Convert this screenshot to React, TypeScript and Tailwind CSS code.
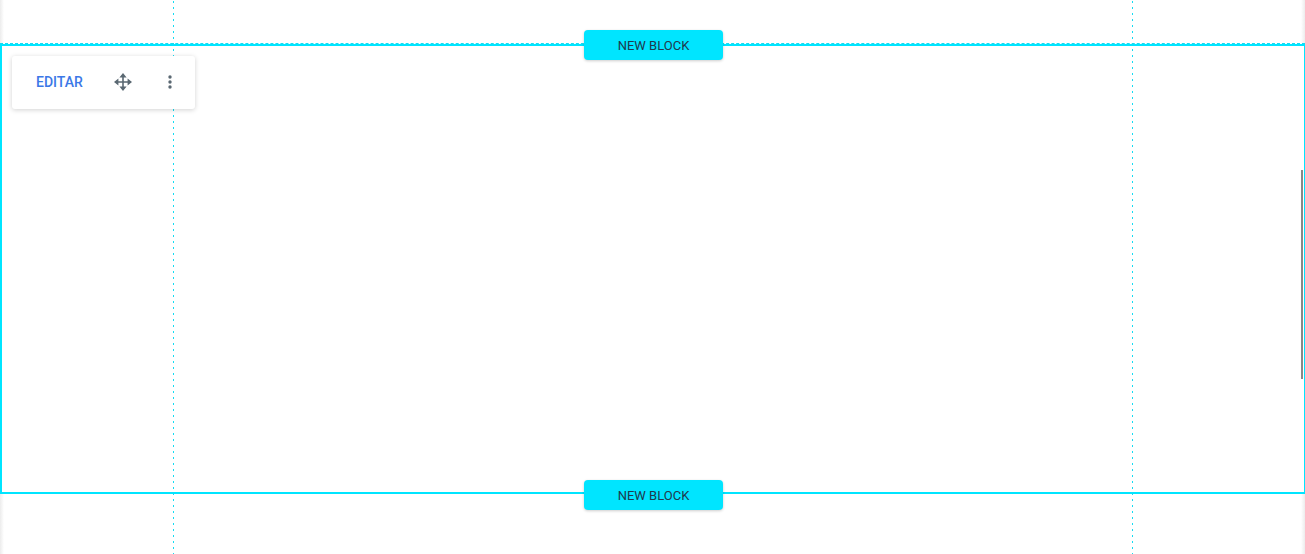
import React from "react";

function MoveIcon() {
  return (
    <svg width="18" height="18" viewBox="0 0 18 18" fill="#5a6872" className="block">
      <path d="M9 0 L12.6 4.4 L9.8 4.4 L9.8 8.2 L13.6 8.2 L13.6 5.4 L18 9 L13.6 12.6 L13.6 9.8 L9.8 9.8 L9.8 13.6 L12.6 13.6 L9 18 L5.4 13.6 L8.2 13.6 L8.2 9.8 L4.4 9.8 L4.4 12.6 L0 9 L4.4 5.4 L4.4 8.2 L8.2 8.2 L8.2 4.4 L5.4 4.4 Z" />
    </svg>
  );
}

function DotsIcon() {
  return (
    <svg width="4" height="14" viewBox="0 0 4 14" fill="#5a6872" className="block">
      <circle cx="2" cy="2" r="1.7" />
      <circle cx="2" cy="7" r="1.7" />
      <circle cx="2" cy="12" r="1.7" />
    </svg>
  );
}

function Guide() {
  return (
    <div className="h-full w-px bg-[repeating-linear-gradient(to_bottom,transparent_0,transparent_1px,#14dcf2_1px,#14dcf2_3.5px,transparent_3.5px,transparent_6px)]" />
  );
}

function NewBlock() {
  return (
    <button className="h-[30px] w-[139px] rounded-[4px] bg-[#00e5ff] pt-[2px] text-center text-[13px] leading-[28px] text-[#1f3a4d] shadow-[0_1px_3px_rgba(0,0,0,0.2)]">
      NEW BLOCK
    </button>
  );
}

export default function App() {
  return (
    <div className="relative flex h-[554px] w-[1305px] flex-col overflow-hidden bg-[linear-gradient(to_right,#ececec,#ffffff_4px,#ffffff_calc(100%-4px),#ececec)] font-['Roboto',sans-serif]">
      {/* dashed line above the selected block */}
      <div className="h-[44px] shrink-0 border-b border-dashed border-[#14dcf2]" />

      {/* selected block */}
      <div className="relative h-[450px] shrink-0 border-y-2 border-r border-l-2 border-[#00e5ff] bg-white pt-[10px] pl-[10px]">
        <div className="relative z-10 flex h-[53px] w-[183px] items-center rounded-[3px] bg-white shadow-[0_1px_5px_rgba(0,0,0,0.18)]">
          <span className="ml-[24px] text-[14px] font-medium text-[#3b78e7]">EDITAR</span>
          <span className="mb-[1px] ml-[31px]"><MoveIcon /></span>
          <span className="mb-[1px] ml-[36px]"><DotsIcon /></span>
        </div>
        {/* scroll thumb */}
        <div className="absolute top-[124px] right-[1px] h-[209px] w-[2px] bg-[#888888]" />
      </div>

      {/* vertical guides, over the page and the block */}
      <div className="absolute inset-y-0 left-[173px] flex w-[960px] justify-between">
        <Guide />
        <Guide />
      </div>

      {/* buttons that lie over the block's top and bottom edges */}
      <div className="absolute inset-0 z-20 flex flex-col items-center justify-between pt-[30px] pb-[44px] pl-[2px]">
        <NewBlock />
        <NewBlock />
      </div>
    </div>
  );
}
